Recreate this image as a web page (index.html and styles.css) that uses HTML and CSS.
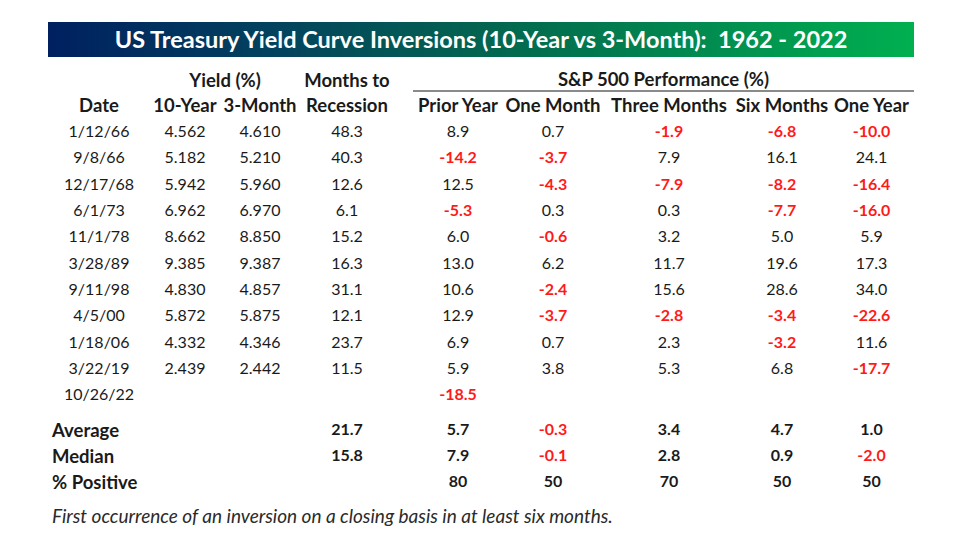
FILE: index.html
```html
<!DOCTYPE html>
<html lang="en">
<head>
<meta charset="utf-8">
<title>US Treasury Yield Curve Inversions</title>
<link rel="stylesheet" href="styles.css">
</head>
<body>
<div class="page">
  <div class="title">US Treasury Yield Curve Inversions (10-Year vs 3-Month):&nbsp; 1962 - 2022</div>
  <div class="table">
    <div class="row head top">
      <span></span>
      <span class="span2">Yield (%)</span>
      <span>Months to</span>
      <span class="perf">S&amp;P 500 Performance (%)</span>
    </div>
    <div class="row head">
      <span>Date</span><span>10-Year</span><span>3-Month</span><span>Recession</span>
      <span class="p">Prior Year</span><span>One Month</span><span>Three Months</span><span>Six Months</span><span>One Year</span>
    </div>

    <div class="row"><span>1/12/66</span><span>4.562</span><span>4.610</span><span>48.3</span><span class="p">8.9</span><span>0.7</span><span class="neg">-1.9</span><span class="neg">-6.8</span><span class="neg">-10.0</span></div>
    <div class="row"><span>9/8/66</span><span>5.182</span><span>5.210</span><span>40.3</span><span class="p neg">-14.2</span><span class="neg">-3.7</span><span>7.9</span><span>16.1</span><span>24.1</span></div>
    <div class="row"><span>12/17/68</span><span>5.942</span><span>5.960</span><span>12.6</span><span class="p">12.5</span><span class="neg">-4.3</span><span class="neg">-7.9</span><span class="neg">-8.2</span><span class="neg">-16.4</span></div>
    <div class="row"><span>6/1/73</span><span>6.962</span><span>6.970</span><span>6.1</span><span class="p neg">-5.3</span><span>0.3</span><span>0.3</span><span class="neg">-7.7</span><span class="neg">-16.0</span></div>
    <div class="row"><span>11/1/78</span><span>8.662</span><span>8.850</span><span>15.2</span><span class="p">6.0</span><span class="neg">-0.6</span><span>3.2</span><span>5.0</span><span>5.9</span></div>
    <div class="row"><span>3/28/89</span><span>9.385</span><span>9.387</span><span>16.3</span><span class="p">13.0</span><span>6.2</span><span>11.7</span><span>19.6</span><span>17.3</span></div>
    <div class="row"><span>9/11/98</span><span>4.830</span><span>4.857</span><span>31.1</span><span class="p">10.6</span><span class="neg">-2.4</span><span>15.6</span><span>28.6</span><span>34.0</span></div>
    <div class="row"><span>4/5/00</span><span>5.872</span><span>5.875</span><span>12.1</span><span class="p">12.9</span><span class="neg">-3.7</span><span class="neg">-2.8</span><span class="neg">-3.4</span><span class="neg">-22.6</span></div>
    <div class="row"><span>1/18/06</span><span>4.332</span><span>4.346</span><span>23.7</span><span class="p">6.9</span><span>0.7</span><span>2.3</span><span class="neg">-3.2</span><span>11.6</span></div>
    <div class="row"><span>3/22/19</span><span>2.439</span><span>2.442</span><span>11.5</span><span class="p">5.9</span><span>3.8</span><span>5.3</span><span>6.8</span><span class="neg">-17.7</span></div>
    <div class="row"><span>10/26/22</span><span></span><span></span><span></span><span class="p neg">-18.5</span></div>

    <div class="row sum first"><span class="label">Average</span><span></span><span></span><span>21.7</span><span class="p">5.7</span><span class="neg">-0.3</span><span>3.4</span><span>4.7</span><span>1.0</span></div>
    <div class="row sum"><span class="label">Median</span><span></span><span></span><span>15.8</span><span class="p">7.9</span><span class="neg">-0.1</span><span>2.8</span><span>0.9</span><span class="neg">-2.0</span></div>
    <div class="row sum"><span class="label">% Positive</span><span></span><span></span><span></span><span class="p">80</span><span>50</span><span>70</span><span>50</span><span>50</span></div>
  </div>
  <div class="note">First occurrence of an inversion on a closing basis in at least six months.</div>
</div>
</body>
</html>
```

FILE: styles.css
```css
html, body {
  margin: 0;
  padding: 0;
  background: #ffffff;
}

body {
  font-family: Lato, "Open Sans", sans-serif;
  color: #1a1a1a;
}

.page {
  width: 866px;
  padding: 22px 0 0 48px;
}

.title {
  height: 35px;
  line-height: 35px;
  background: linear-gradient(90deg, #002060 0%, #03455d 28%, #03674f 52%, #00b050 100%);
  color: #ffffff;
  font-weight: 700;
  font-size: 23.5px;
  text-align: center;
}

.table {
  margin-top: 10px;
  font-size: 16px;
}

.row {
  display: grid;
  grid-template-columns: 102px 70px 80px 94px 19px 90px 100px 132px 94px 85px;
  height: 26.3px;
  align-items: center;
  text-align: center;
  white-space: nowrap;
}

.row.head {
  height: 25.5px;
  font-weight: 700;
  font-size: 18.5px;
}

.row.head.top {
  height: 25px;
}

.row .p {
  grid-column-start: 6;
}

.span2 {
  grid-column: 2 / span 2;
}

.perf {
  grid-column: 6 / span 5;
  align-self: stretch;
  display: flex;
  align-items: center;
  justify-content: center;
  border-bottom: 2px solid #8a8a8a;
  box-sizing: border-box;
}

.neg {
  color: #ff1a1a;
  font-weight: 700;
}

.row.sum {
  height: 26px;
  font-weight: 700;
}

.row.sum.first {
  margin-top: 9px;
}

.label {
  text-align: left;
  padding-left: 4px;
  padding-top: 2px;
  font-size: 18.5px;
}

.note {
  margin-top: 10px;
  padding-left: 4px;
  font-style: italic;
  font-size: 19px;
  color: #2a2a2a;
}
```
